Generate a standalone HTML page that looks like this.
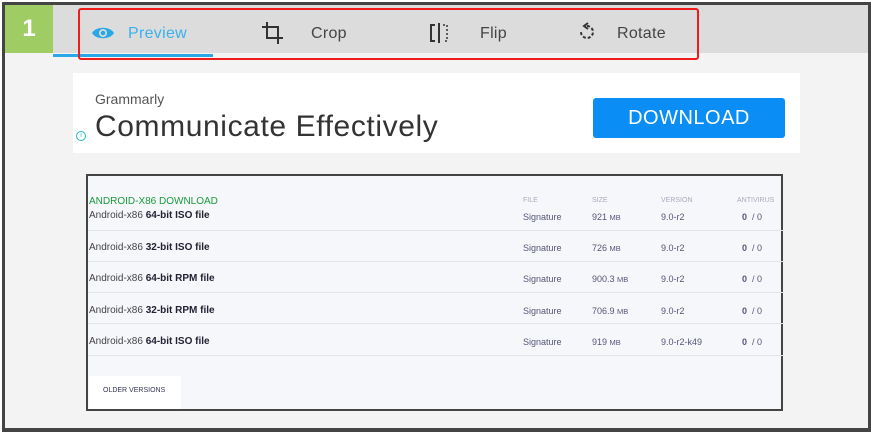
<!DOCTYPE html>
<html><head><style>
*{margin:0;padding:0;box-sizing:border-box}
body{width:873px;height:434px;background:#fff;font-family:"Liberation Sans",sans-serif;position:relative;overflow:hidden}
.frame{position:absolute;left:2px;top:2px;width:869px;height:430px;border:3px solid #444;border-bottom-width:4px;background:#f3f3f3}
.bar{position:absolute;left:0;top:5px;width:863px;height:48px;background:#dcdcdc}
.num{position:absolute;left:0;top:5px;width:48px;height:48px;background:#a0cd63;color:#fff;font-weight:bold;font-size:24px;text-align:center;line-height:48px}
.ul{position:absolute;left:48px;top:51px;width:160px;height:3px;background:#29a8e8}
.red{position:absolute;left:78px;top:8px;width:621px;height:52px;border:2.5px solid #f01b1b;border-radius:3px}
.t{position:absolute;top:25px;font-size:16px;color:#444;letter-spacing:0.3px}
.ad{position:absolute;left:73px;top:73px;width:727px;height:80px;background:#fff}
.dl{position:absolute;left:593px;top:98px;width:192px;height:40px;background:#0a8df5;border-radius:3px;color:#fff;font-size:20px;text-align:center;line-height:40px;letter-spacing:0.5px}
.panel{position:absolute;left:86px;top:174px;width:697px;height:237px;border:2px solid #444;background:#f6f7fb}
.r{position:absolute;left:89px;font-size:10px;color:#444}
.r b{color:#223}
.c{position:absolute;font-size:9px;color:#557}
.h{position:absolute;top:197px;font-size:7px;color:#aab}
.sep{position:absolute;left:88px;width:696px;height:1px;background:#e2e4ea}
</style></head><body>
<div class="frame"></div>
<div class="bar" style="left:5px"></div>
<div class="num" style="left:5px">1</div>
<div class="ul" style="left:53px;top:54px"></div>
<div class="red"></div>
<svg style="position:absolute;left:91px;top:25px" width="24" height="16" viewBox="0 0 24 16"><path d="M1 8C5 1 19 1 23 8C19 15 5 15 1 8Z" fill="#29a8e8"/><circle cx="12" cy="8" r="4" fill="#dcdcdc"/><circle cx="12" cy="8" r="2.3" fill="#29a8e8"/></svg>
<div class="t" style="left:128px;color:#3ab0ee">Preview</div>
<svg style="position:absolute;left:262px;top:22px" width="22" height="22" viewBox="0 0 22 22" fill="none" stroke="#333" stroke-width="2"><path d="M5 0V16H21M0 5H16V22"/></svg>
<div class="t" style="left:311px">Crop</div>
<svg style="position:absolute;left:429px;top:23px" width="20" height="20" viewBox="0 0 20 20" fill="none" stroke="#333" stroke-width="2"><path d="M6 2H2V18H6M10 0V20"/><path d="M14 2H18V18H14" stroke-dasharray="2 2" stroke-width="1.5"/></svg>
<div class="t" style="left:480px">Flip</div>
<svg style="position:absolute;left:577px;top:22px" width="20" height="20" viewBox="0 0 20 20" fill="none" stroke="#333" stroke-width="2"><path d="M10 4A6 6 0 1 1 4 10" stroke-dasharray="3 2"/><path d="M11 1L7 4L11 7" /></svg>
<div class="t" style="left:617px">Rotate</div>
<div class="ad"></div>
<div style="position:absolute;left:95px;top:91px;font-size:14px;color:#555">Grammarly</div>
<div style="position:absolute;left:95px;top:110px;font-size:30px;color:#333;letter-spacing:0.6px">Communicate Effectively</div>
<div style="position:absolute;left:76px;top:131px;width:10px;height:10px;border:1px solid #2bb;border-radius:50%;font-size:7px;color:#2bb;text-align:center;line-height:8px">i</div>
<div class="dl">DOWNLOAD</div>
<div class="panel"></div>
<div style="position:absolute;left:89px;top:196px;font-size:10px;color:#1a9a3a">ANDROID-X86 DOWNLOAD</div>
<div class="h" style="left:523px">FILE</div><div class="h" style="left:592px">SIZE</div><div class="h" style="left:661px">VERSION</div><div class="h" style="left:737px">ANTIVIRUS</div>
<div class="r" style="top:210px">Android-x86 <b>64-bit ISO file</b></div>
<div class="r" style="top:242px">Android-x86 <b>32-bit ISO file</b></div>
<div class="r" style="top:273px">Android-x86 <b>64-bit RPM file</b></div>
<div class="r" style="top:305px">Android-x86 <b>32-bit RPM file</b></div>
<div class="r" style="top:336px">Android-x86 <b>64-bit ISO file</b></div>
<div class="sep" style="top:230px"></div><div class="sep" style="top:261px"></div><div class="sep" style="top:292px"></div><div class="sep" style="top:323px"></div><div class="sep" style="top:355px"></div>
<div class="c" style="left:523px;top:212px">Signature</div><div class="c" style="left:592px;top:212px">921 <small>MB</small></div><div class="c" style="left:661px;top:212px">9.0-r2</div><div class="c" style="left:742px;top:212px"><b>0</b> &nbsp;/ 0</div>
<div class="c" style="left:523px;top:243px">Signature</div><div class="c" style="left:592px;top:243px">726 <small>MB</small></div><div class="c" style="left:661px;top:243px">9.0-r2</div><div class="c" style="left:742px;top:243px"><b>0</b> &nbsp;/ 0</div>
<div class="c" style="left:523px;top:274px">Signature</div><div class="c" style="left:592px;top:274px">900.3 <small>MB</small></div><div class="c" style="left:661px;top:274px">9.0-r2</div><div class="c" style="left:742px;top:274px"><b>0</b> &nbsp;/ 0</div>
<div class="c" style="left:523px;top:306px">Signature</div><div class="c" style="left:592px;top:306px">706.9 <small>MB</small></div><div class="c" style="left:661px;top:306px">9.0-r2</div><div class="c" style="left:742px;top:306px"><b>0</b> &nbsp;/ 0</div>
<div class="c" style="left:523px;top:337px">Signature</div><div class="c" style="left:592px;top:337px">919 <small>MB</small></div><div class="c" style="left:661px;top:337px">9.0-r2-k49</div><div class="c" style="left:742px;top:337px"><b>0</b> &nbsp;/ 0</div>
<div style="position:absolute;left:89px;top:376px;width:92px;height:33px;background:#fff;font-size:7px;color:#335;padding:11px 0 0 14px">OLDER VERSIONS</div>
</body></html>
